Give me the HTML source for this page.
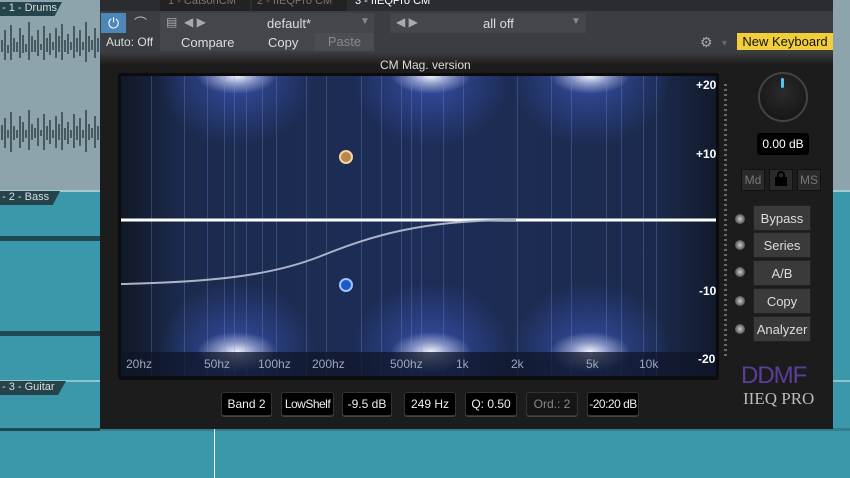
<!DOCTYPE html>
<html><head><meta charset="utf-8"><style>
*{margin:0;padding:0;box-sizing:border-box}
body{width:850px;height:478px;overflow:hidden;position:relative;background:#3b97aa;font-family:"Liberation Sans",sans-serif}
.a{position:absolute}
.t{color:#ddd;font-size:12px}
.btn{position:absolute;background:#000;border:1px solid #333;border-radius:3px;color:#eee;font-size:12px;text-align:center;line-height:22px;height:24px;box-shadow:0 1px 0 #444}
.rb{position:absolute;left:753px;width:58px;height:26px;background:#3a3a3a;border:1px solid #222;color:#ddd;font-size:13px;text-align:center;line-height:25px}
.led{position:absolute;left:735px;width:10px;height:10px;border-radius:50%;background:radial-gradient(#ccc,#666 60%,#222)}
.fl{position:absolute;top:357px;color:#9aa6bd;font-size:12px}
.db{position:absolute;color:#fff;font-size:12px;font-weight:bold}
.vl{position:absolute;top:0;bottom:0;width:1px;background:rgba(120,150,230,.3)}
</style></head><body>
<div class="a" style="left:0;top:0;width:850px;height:190px;background:#8ea4ac"></div>
<div class="a" style="left:0;top:190px;width:850px;height:2px;background:#a5c9d0"></div>
<div class="a" style="left:0;top:380px;width:850px;height:2px;background:#8cc3cc"></div>
<svg class="a" style="left:0;top:0" width="100" height="478">
<g stroke="#1b2a30" stroke-width="1.2">
<path d="M2 40v12M5 30v30M8 45v8M11 25v35M14 38v14M17 42v10M20 28v30M23 35v18M26 44v8M29 22v38M32 36v16M35 40v12M38 30v26M41 44v6M44 26v34M47 38v14M50 33v22M53 42v8M56 28v30M59 36v16M62 24v36M65 40v12M68 34v20M71 42v8M74 26v32M77 38v14M80 30v26M83 42v8M86 22v40M89 36v16M92 40v10M95 28v30M98 38v14"/>
<path d="M2 125v15M5 118v30M8 130v8M11 112v40M14 126v14M17 130v8M20 116v32M23 122v20M26 130v8M29 110v40M32 124v16M35 128v10M38 118v28M41 130v6M44 114v36M47 126v14M50 120v24M53 130v8M56 116v32M59 124v16M62 112v38M65 128v12M68 122v22M71 130v8M74 114v34M77 126v14M80 118v28M83 130v8M86 110v42M89 124v16M92 128v10M95 116v32M98 126v14"/>
</g>
<path d="M0 236h100v5H0zM0 331h100v5H0zM0 428h100v3H0z" fill="#1e4852"/>
</svg>
<div class="a" style="left:0;top:2px;width:62px;height:14px;background:#24434b;color:#ddd;font-size:11px;padding-left:2px;clip-path:polygon(0 0,100% 0,88% 100%,0 100%)">- 1 - Drums</div>
<div class="a" style="left:0;top:191px;width:60px;height:14px;background:#24434b;color:#ddd;font-size:11px;padding-left:2px;clip-path:polygon(0 0,100% 0,88% 100%,0 100%)">- 2 - Bass</div>
<div class="a" style="left:0;top:381px;width:66px;height:14px;background:#24434b;color:#ddd;font-size:11px;padding-left:2px;clip-path:polygon(0 0,100% 0,88% 100%,0 100%)">- 3 - Guitar</div>
<div class="a" style="left:100px;top:428px;width:750px;height:3px;background:#2d6a78;opacity:.6"></div>
<div class="a" style="left:214px;top:428px;width:1px;height:50px;background:#eee"></div>
<div class="a" style="left:100px;top:0;width:733px;height:53px;background:#3a3e42"></div>
<div class="a" style="left:100px;top:0;width:733px;height:11px;background:#2a2d30"></div>
<div class="a" style="left:160px;top:0;width:90px;height:11px;background:#222;color:#777;font-size:11px;line-height:2px;padding-left:8px">1 - CatsonCM</div>
<div class="a" style="left:252px;top:0;width:95px;height:11px;background:#222;color:#777;font-size:11px;line-height:2px;padding-left:5px">2 - IIEQPro CM</div>
<div class="a" style="left:352px;top:0;width:100px;height:11px;color:#fff;font-size:11px;line-height:2px;padding-left:3px">3 - IIEQPro CM</div>
<div class="a" style="left:101px;top:13px;width:25px;height:20px;background:#4d87b8;color:#fff;font-size:14px;text-align:center;line-height:20px">⏻</div>
<div class="a t" style="left:134px;top:13px;font-size:13px;color:#bbb">⌒</div>
<div class="a t" style="left:106px;top:35px">Auto: Off</div>
<div class="a" style="left:160px;top:13px;width:214px;height:20px;background:#43474b"></div>
<div class="a t" style="left:166px;top:15px;color:#aaa">▤ &nbsp;◀ ▶</div>
<div class="a t" style="left:267px;top:16px;font-size:13px">default*</div>
<div class="a" style="left:360px;top:16px;color:#888;font-size:10px">▼</div>
<div class="a" style="left:390px;top:13px;width:196px;height:20px;background:#43474b"></div>
<div class="a t" style="left:396px;top:15px;color:#aaa">◀ ▶</div>
<div class="a t" style="left:483px;top:16px;font-size:13px">all off</div>
<div class="a" style="left:571px;top:16px;color:#888;font-size:10px">▼</div>
<div class="a" style="left:160px;top:33px;width:214px;height:18px;background:#43474b"></div>
<div class="a t" style="left:181px;top:35px;font-size:13px">Compare</div>
<div class="a t" style="left:268px;top:35px;font-size:13px">Copy</div>
<div class="a" style="left:315px;top:33px;width:59px;height:18px;background:#4a4e52;color:#888;font-size:13px;text-align:center;line-height:18px">Paste</div>
<div class="a" style="left:700px;top:34px;color:#aaa;font-size:14px">⚙</div>
<div class="a" style="left:720px;top:38px;color:#666;font-size:9px">▼</div>
<div class="a" style="left:737px;top:33px;width:96px;height:17px;background:#f2cf3a;color:#111;font-size:13px;text-align:center;line-height:17px">New Keyboard</div>
<div class="a" style="left:100px;top:53px;width:733px;height:376px;background:linear-gradient(#3a3a3a,#1c1c1c 12px,#1c1c1c)"></div>
<div class="a t" style="left:380px;top:58px;color:#ddd">CM Mag. version</div>
<div class="a" style="left:118px;top:73px;width:601px;height:307px;background:#0c0c0e;border-radius:3px"></div>
<div class="a" style="left:121px;top:76px;width:595px;height:300px;overflow:hidden;background:
radial-gradient(ellipse 40px 18px at 116px 0,rgba(250,250,255,.95),rgba(250,250,255,.4) 50%,transparent),
radial-gradient(ellipse 40px 18px at 310px 0,rgba(250,250,255,.95),rgba(250,250,255,.4) 50%,transparent),
radial-gradient(ellipse 40px 18px at 469px 0,rgba(250,250,255,.95),rgba(250,250,255,.4) 50%,transparent),
radial-gradient(ellipse 40px 20px at 116px 276px,rgba(250,250,255,.95),rgba(250,250,255,.4) 50%,transparent),
radial-gradient(ellipse 40px 20px at 310px 276px,rgba(250,250,255,.95),rgba(250,250,255,.4) 50%,transparent),
radial-gradient(ellipse 40px 20px at 469px 276px,rgba(250,250,255,.95),rgba(250,250,255,.4) 50%,transparent),
radial-gradient(ellipse 80px 70px at 116px 0,rgba(70,100,220,.6),transparent),
radial-gradient(ellipse 80px 70px at 310px 0,rgba(70,100,220,.6),transparent),
radial-gradient(ellipse 80px 70px at 469px 0,rgba(70,100,220,.6),transparent),
radial-gradient(ellipse 80px 70px at 116px 276px,rgba(70,100,220,.6),transparent),
radial-gradient(ellipse 80px 70px at 310px 276px,rgba(70,100,220,.6),transparent),
radial-gradient(ellipse 80px 70px at 469px 276px,rgba(70,100,220,.6),transparent),
linear-gradient(90deg,#111826,#1b2a4c 10%,#1d2d57 50%,#1b2a4c 90%,#121a2c)">
<div class="vl" style="left:30px"></div><div class="vl" style="left:63px"></div><div class="vl" style="left:86px"></div><div class="vl" style="left:103px"></div><div class="vl" style="left:113px"></div><div class="vl" style="left:125px"></div><div class="vl" style="left:141px"></div><div class="vl" style="left:155px"></div><div class="vl" style="left:185px"></div><div class="vl" style="left:205px"></div><div class="vl" style="left:240px"></div><div class="vl" style="left:260px"></div><div class="vl" style="left:280px"></div><div class="vl" style="left:290px"></div><div class="vl" style="left:300px"></div><div class="vl" style="left:322px"></div><div class="vl" style="left:342px"></div><div class="vl" style="left:396px"></div><div class="vl" style="left:430px"></div><div class="vl" style="left:450px"></div><div class="vl" style="left:485px"></div><div class="vl" style="left:500px"></div><div class="vl" style="left:522px"></div><div class="vl" style="left:535px"></div>
<div class="a" style="left:0;top:276px;width:595px;height:24px;background:rgba(15,22,40,.75)"></div>
</div>
<svg class="a" style="left:121px;top:76px" width="595" height="300">
<line x1="0" y1="144" x2="595" y2="144" stroke="#fff" stroke-width="3"/>
<path d="M0 208 C90 206 150 200 200 180 S300 144 395 144" fill="none" stroke="#aab3c8" stroke-width="2"/>
<circle cx="225" cy="81" r="6" fill="#b8874a" stroke="#f4d6a0" stroke-width="2"/>
<circle cx="225" cy="209" r="6" fill="#1e58c8" stroke="#9ec3ff" stroke-width="2"/>
</svg>
<div class="fl" style="left:126px">20hz</div><div class="fl" style="left:204px">50hz</div><div class="fl" style="left:258px">100hz</div><div class="fl" style="left:312px">200hz</div><div class="fl" style="left:390px">500hz</div><div class="fl" style="left:456px">1k</div><div class="fl" style="left:511px">2k</div><div class="fl" style="left:586px">5k</div><div class="fl" style="left:639px">10k</div>
<div class="db" style="left:696px;top:78px">+20</div><div class="db" style="left:696px;top:147px">+10</div><div class="db" style="left:699px;top:284px">-10</div><div class="db" style="left:698px;top:352px">-20</div>
<div class="a" style="left:724px;top:84px;width:3px;height:272px;background:repeating-linear-gradient(#666 0 2px,transparent 2px 5px)"></div>
<div class="a" style="left:758px;top:72px;width:50px;height:50px;border-radius:50%;background:radial-gradient(circle at 50% 40%,#2b2b2b,#111);border:2px solid #444"></div>
<div class="a" style="left:781px;top:78px;width:3px;height:10px;background:#4cc8f0;border-radius:2px"></div>
<div class="a" style="left:757px;top:133px;width:52px;height:22px;background:#000;color:#fff;font-size:12px;text-align:center;line-height:22px;border-radius:3px">0.00 dB</div>
<div class="a" style="left:741px;top:169px;width:24px;height:22px;background:#2a2a2a;border:1px solid #111;color:#777;font-size:12px;text-align:center;line-height:20px">Md</div>
<div class="a" style="left:769px;top:169px;width:24px;height:22px;background:#2a2a2a;border:1px solid #111"></div>
<div class="a" style="left:775px;top:177px;width:12px;height:9px;background:#000"></div>
<div class="a" style="left:777px;top:171px;width:8px;height:8px;border:2px solid #000;border-bottom:none;border-radius:4px 4px 0 0"></div>
<div class="a" style="left:797px;top:169px;width:24px;height:22px;background:#2a2a2a;border:1px solid #111;color:#777;font-size:12px;text-align:center;line-height:20px">MS</div>
<div class="rb" style="top:205px">Bypass</div><div class="rb" style="top:232px">Series</div><div class="rb" style="top:260px">A/B</div><div class="rb" style="top:288px">Copy</div><div class="rb" style="top:316px">Analyzer</div>
<div class="led" style="top:214px"></div><div class="led" style="top:240px"></div><div class="led" style="top:267px"></div><div class="led" style="top:296px"></div><div class="led" style="top:324px"></div>
<div class="a" style="left:741px;top:362px;color:#5b3e9a;font-size:24px;letter-spacing:-1px">DDMF</div>
<div class="a" style="left:743px;top:389px;color:#bbb;font-size:17px;font-family:'Liberation Serif',serif">IIEQ PRO</div>
<div class="btn" style="left:221px;top:392px;width:51px">Band 2</div>
<div class="btn" style="left:281px;top:392px;width:53px;letter-spacing:-.5px">LowShelf</div>
<div class="btn" style="left:342px;top:392px;width:50px">-9.5 dB</div>
<div class="btn" style="left:404px;top:392px;width:52px">249 Hz</div>
<div class="btn" style="left:465px;top:392px;width:52px">Q: 0.50</div>
<div class="btn" style="left:526px;top:392px;width:52px;background:#161616;color:#888">Ord.: 2</div>
<div class="btn" style="left:587px;top:392px;width:52px;letter-spacing:-.5px">-20:20 dB</div>
</body></html>
